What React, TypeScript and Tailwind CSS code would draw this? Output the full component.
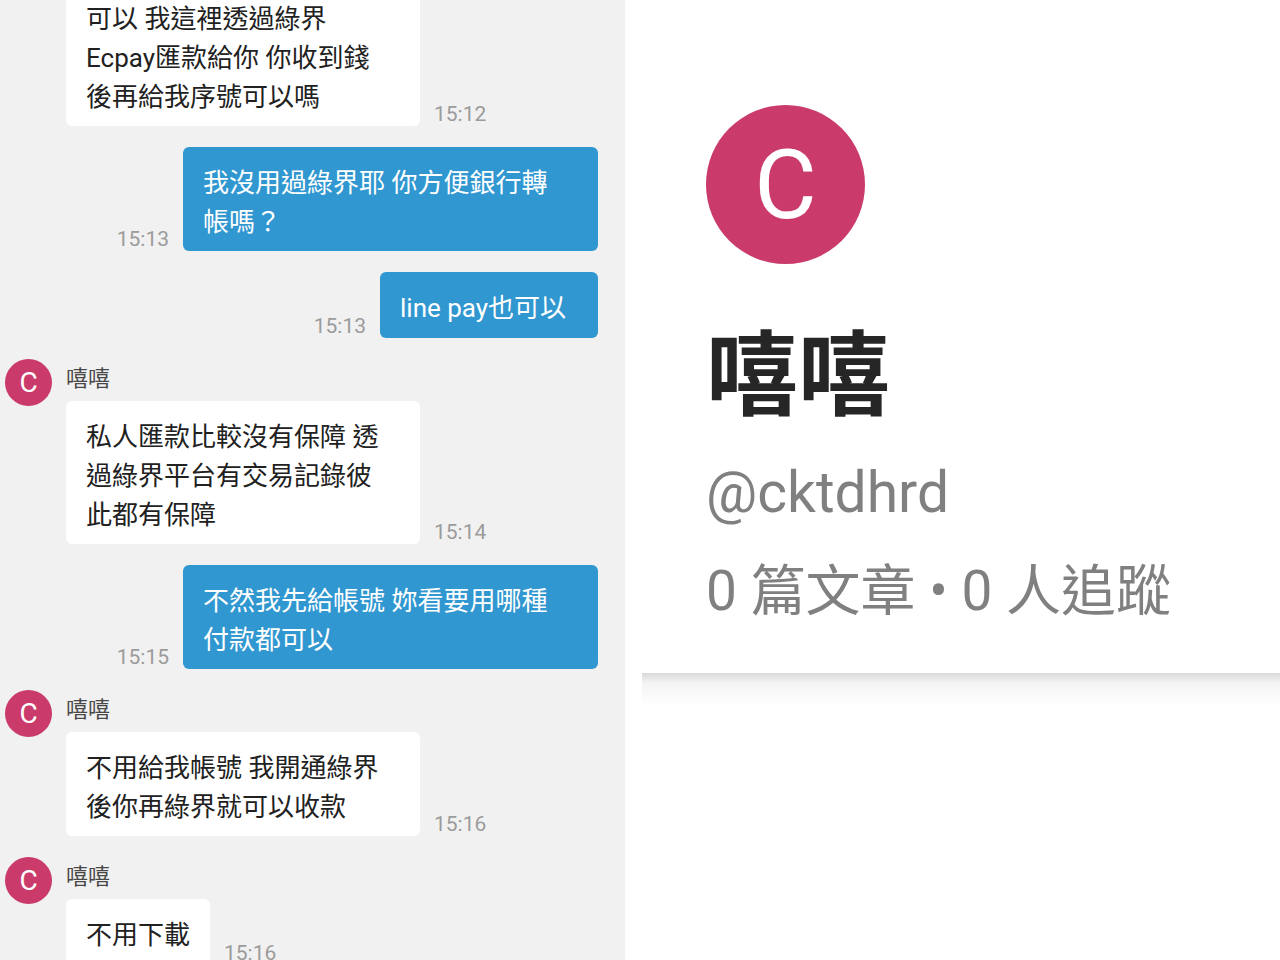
type Message = { mine?: boolean; named?: boolean; lines: string[]; time: string };

const messages: Message[] = [
  { lines: ['可以 我這裡透過綠界', 'Ecpay匯款給你 你收到錢', '後再給我序號可以嗎'], time: '15:12' },
  { mine: true, lines: ['我沒用過綠界耶 你方便銀行轉', '帳嗎？'], time: '15:13' },
  { mine: true, lines: ['line pay也可以'], time: '15:13' },
  { named: true, lines: ['私人匯款比較沒有保障 透', '過綠界平台有交易記錄彼', '此都有保障'], time: '15:14' },
  { mine: true, lines: ['不然我先給帳號 妳看要用哪種', '付款都可以'], time: '15:15' },
  { named: true, lines: ['不用給我帳號 我開通綠界', '後你再綠界就可以收款'], time: '15:16' },
  { named: true, lines: ['不用下載'], time: '15:16' },
];

function Bubble({ message }: { message: Message }) {
  const wide = message.lines.length > 1;
  const tone = message.mine ? 'min-w-[218px] bg-[#3197d0] text-white' : 'bg-white text-[#212121]';
  const width = wide ? (message.mine ? 'w-[415px]' : 'w-[354px]') : '';
  return (
    <p className={`min-h-[66px] rounded-md px-5 pt-[17px] pb-[9px] text-[26px] leading-[39px] whitespace-nowrap ${tone} ${width}`}>
      {message.lines.map((line) => (
        <span key={line} className="block">{line}</span>
      ))}
    </p>
  );
}

function MessageRow({ message }: { message: Message }) {
  const body = (
    <div className={`flex items-end gap-[14px] ${message.mine ? 'flex-row-reverse' : ''}`}>
      <Bubble message={message} />
      <time className="text-[21px] leading-6 text-[#9b9b9b]">{message.time}</time>
    </div>
  );
  if (message.mine) return <li className="pr-[27px]">{body}</li>;
  return (
    <li className="flex gap-[14px] pl-[5px]">
      <div className="w-[47px] shrink-0">
        {message.named && (
          <div className="flex h-[47px] items-center justify-center rounded-full bg-[#ca3a6a] text-[28px] text-white">C</div>
        )}
      </div>
      <div>
        {message.named && <h2 className="h-[42px] text-[22px] leading-10 text-[#484848]">嘻嘻</h2>}
        {body}
      </div>
    </li>
  );
}

export default function App() {
  return (
    <div
      lang="zh-Hant"
      className="flex h-screen gap-[17px] overflow-hidden bg-white font-[Roboto,'Noto_Sans_CJK_TC',sans-serif]"
    >
      <main className="w-[625px] shrink-0 overflow-hidden bg-[#f1f1f1]">
        <ol className="-mt-[17px] flex flex-col gap-[21px]">
          {messages.map((message, i) => (
            <MessageRow key={i} message={message} />
          ))}
        </ol>
      </main>
      <aside className="min-w-0 flex-1">
        <section className="px-16 pt-[105px] pb-11 whitespace-nowrap">
          <div className="flex size-[159px] items-center justify-center rounded-full bg-[#ca3a6a] text-[96px] text-white">C</div>
          <h1 className="mt-[53px] text-[92px] leading-[120px] font-bold text-[#262626]">嘻嘻</h1>
          <p className="mt-4 text-[57px] leading-[80px] text-[#808080]">@cktdhrd</p>
          <p className="mt-5 text-[55px] leading-[76px] text-[#808080]">0 篇文章 • 0 人追蹤</p>
        </section>
        <div className="h-8 bg-linear-to-b from-[#d9d9d9] via-[#f3f3f3] via-30% to-white" />
      </aside>
    </div>
  );
}
